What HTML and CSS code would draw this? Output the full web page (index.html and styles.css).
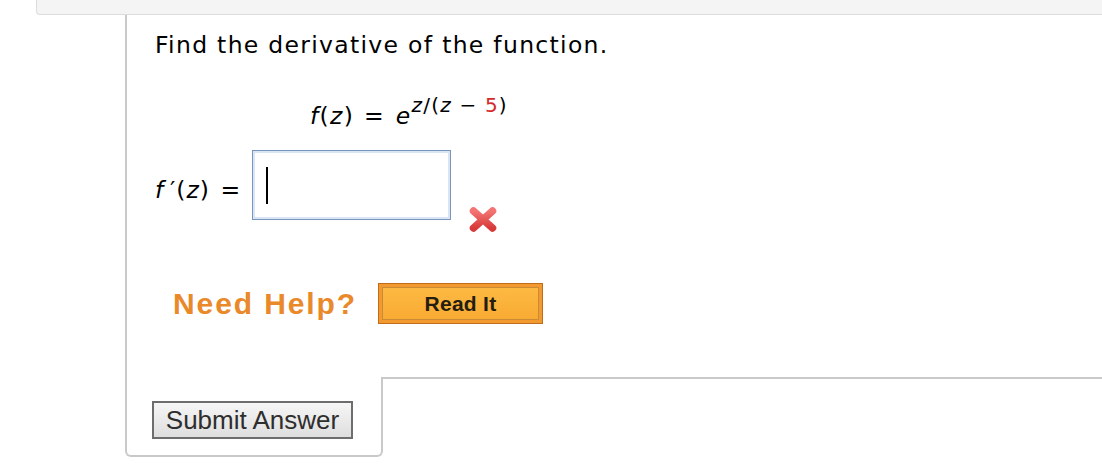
FILE: index.html
```html
<!DOCTYPE html>
<html>
<head>
<meta charset="utf-8">
<link rel="stylesheet" href="styles.css">
</head>
<body>
<div class="topbar"></div>
<div class="question">
  <p class="prompt">Find the derivative of the function.</p>
  <div class="formula"><i>f</i>(<i>z</i>) <span class="eq">=</span> <i>e</i><sup class="exp"><i>z</i>/(<i>z</i> − <span class="red">5</span>)</sup></div>
  <div class="answer-row">
    <div class="label"><i>f</i>&#8201;′(<i>z</i>) <span class="eq">=</span></div>
    <div class="input"><span class="caret"></span></div>
    <svg class="xmark" width="28" height="25" viewBox="0 0 28 25">
      <defs>
        <linearGradient id="xg" x1="0" y1="0" x2="0" y2="1">
          <stop offset="0" stop-color="#f47474"/>
          <stop offset="1" stop-color="#d83a3a"/>
        </linearGradient>
      </defs>
      <path d="M4.5 4 L23.5 21 M23.5 4 L4.5 21" stroke="url(#xg)" stroke-width="7.5" stroke-linecap="round"/>
    </svg>
  </div>
  <div class="help-row">
    <span class="need-help">Need Help?</span>
    <button class="read-it">Read It</button>
  </div>
</div>
<div class="footer">
  <div class="submit-tab">
    <button class="submit">Submit Answer</button>
  </div>
  <div class="rest"></div>
</div>
</body>
</html>
```

FILE: styles.css
```css
html, body {
  margin: 0;
  padding: 0;
  background: #fff;
}
body {
  width: 1102px;
  height: 466px;
  overflow: hidden;
  font-family: "DejaVu Sans", Verdana, sans-serif;
  color: #000;
}
.topbar {
  margin-left: 36px;
  height: 14px;
  background: #f4f4f4;
  border-left: 1px solid #dcdcdc;
  border-bottom: 1px solid #dcdcdc;
  border-bottom-left-radius: 4px;
}
.question {
  margin-left: 125px;
  border-left: 2px solid #c9c9c9;
  padding: 16px 0 53px 28px;
}
.prompt {
  margin: 0;
  font-size: 23.5px;
  line-height: 28px;
  letter-spacing: 1.3px;
}
.formula {
  margin-top: 43px;
  padding-left: 155px;
  font-size: 23.5px;
  line-height: 28px;
  letter-spacing: 1.3px;
}
.formula .eq {
  margin: 0 2px 0 1px;
}
.eq {
  margin: 0 2px;
}
.exp {
  font-size: 20px;
  line-height: 0;
  vertical-align: 12px;
  letter-spacing: 1.2px;
}
.red {
  color: #d42a2a;
}
.answer-row {
  display: flex;
  align-items: flex-start;
  margin-top: 20px;
}
.label {
  font-size: 23.5px;
  line-height: 28px;
  letter-spacing: 1px;
  margin-top: 26px;
  width: 97px;
}
.input {
  height: 68px;
  border: 1px solid #7895bd;
  box-shadow: inset 0 0 0 2px #d9e5f4;
  background: #fff;
  display: flex;
  align-items: center;
  padding-left: 13px;
  box-sizing: content-box;
  width: 184px;
}
.caret {
  width: 2px;
  height: 37px;
  background: #000;
}
.xmark {
  margin-left: 18px;
  margin-top: 57px;
}
.help-row {
  display: flex;
  align-items: center;
  margin-top: 51px;
  padding-left: 18px;
}
.need-help {
  font-family: "Liberation Sans", Arial, sans-serif;
  font-weight: bold;
  font-size: 30px;
  color: #e9892a;
  display: inline-block;
  width: 205px;
  letter-spacing: 1.9px;
}
.read-it {
  width: 165px;
  height: 41px;
  margin: 0;
  padding: 0;
  font-family: "Liberation Sans", Arial, sans-serif;
  font-weight: bold;
  font-size: 21px;
  letter-spacing: 0.3px;
  color: #241d10;
  background: linear-gradient(#fdbb45, #f8a931);
  border: 1px solid #c06c1e;
  box-shadow: inset 0 0 0 3px #f39a2e, inset 0 0 0 4px #c98b38;
}
.footer {
  display: flex;
  margin-left: 125px;
}
.submit-tab {
  border: 2px solid #c9c9c9;
  border-top: none;
  border-bottom-left-radius: 6px;
  border-bottom-right-radius: 6px;
  padding: 24px 0 0 25px;
  box-sizing: border-box;
  width: 258px;
  height: 80px;
}
.submit {
  width: 201px;
  height: 38px;
  margin: 0;
  padding: 0;
  font-family: "Liberation Sans", Arial, sans-serif;
  font-size: 26px;
  color: #2e2e2e;
  background: linear-gradient(#f6f6f6, #dedede);
  border: 2px solid #6d6d6d;
}
.rest {
  flex: 1;
  border-top: 2px solid #c9c9c9;
}
```
